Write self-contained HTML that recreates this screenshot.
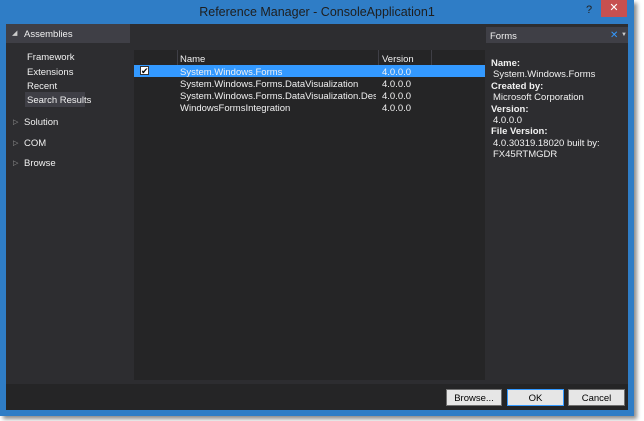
<!DOCTYPE html><html><head><style>
body{margin:0;width:644px;height:421px;background:#fff;font-family:"Liberation Sans",sans-serif;font-size:9.5px;color:#f1f1f1;position:relative;overflow:hidden}
.a{position:absolute}
.win{left:0;top:0;width:634px;height:416px;background:#2f7dc6;box-shadow:3px 3px 4px rgba(0,0,0,.45)}
.t{white-space:nowrap;margin-top:1px}
.btn{position:absolute;top:389px;height:17px;background:#e6e6e6;border:1px solid #707070;color:#000;text-align:center;line-height:17px;box-sizing:border-box}
</style></head><body>
<div class="a win"></div>
<div class="a t" style="left:0;width:634px;top:4px;text-align:center;font-size:12.5px;color:#1e1e1e">Reference Manager - ConsoleApplication1</div>
<div class="a t" style="left:586px;top:3px;font-size:11px;color:#222">?</div>
<div class="a" style="left:601px;top:0;width:26px;height:17px;background:#c75050;color:#fff;text-align:center;font-size:11px;line-height:17px">✕</div>
<div class="a" style="left:6px;top:24px;width:622px;height:386px;background:#2d2d30"></div>
<div class="a" style="left:6px;top:24px;width:124px;height:19px;background:#3f3f46"></div>
<div class="a t" style="left:12px;top:28px;font-size:7px;color:#ccc">◢</div>
<div class="a t" style="left:24px;top:28px">Assemblies</div>
<div class="a t" style="left:27px;top:51px">Framework</div>
<div class="a t" style="left:27px;top:66px">Extensions</div>
<div class="a t" style="left:27px;top:80px">Recent</div>
<div class="a" style="left:25px;top:92px;width:60px;height:15px;background:#3f3f46"></div>
<div class="a t" style="left:27px;top:94px">Search Results</div>
<div class="a t" style="left:13px;top:117px;font-size:7px;color:#999">▷</div><div class="a t" style="left:24px;top:116px">Solution</div>
<div class="a t" style="left:13px;top:138px;font-size:7px;color:#999">▷</div><div class="a t" style="left:24px;top:137px">COM</div>
<div class="a t" style="left:13px;top:158px;font-size:7px;color:#999">▷</div><div class="a t" style="left:24px;top:157px">Browse</div>
<div class="a" style="left:134px;top:50px;width:351px;height:330px;background:#252526"></div>
<div class="a" style="left:134px;top:50px;width:351px;height:15px;background:#252526;border-bottom:1px solid #3f3f46"></div>
<div class="a" style="left:177px;top:50px;width:1px;height:15px;background:#3f3f46"></div>
<div class="a" style="left:378px;top:50px;width:1px;height:15px;background:#3f3f46"></div>
<div class="a" style="left:431px;top:50px;width:1px;height:15px;background:#3f3f46"></div>
<div class="a t" style="left:180px;top:53px">Name</div>
<div class="a t" style="left:382px;top:53px">Version</div>
<div class="a" style="left:134px;top:65px;width:351px;height:12px;background:#3399ff"></div>
<div class="a" style="left:140px;top:66px;width:9px;height:9px;background:#fff;border:1px solid #333;color:#000;font-size:9px;line-height:9px;text-align:center;box-sizing:border-box">✔</div>
<div class="a t" style="left:180px;top:66px">System.Windows.Forms</div><div class="a t" style="left:382px;top:66px">4.0.0.0</div>
<div class="a t" style="left:180px;top:78px">System.Windows.Forms.DataVisualization</div><div class="a t" style="left:382px;top:78px">4.0.0.0</div>
<div class="a t" style="left:180px;top:90px;width:196px;overflow:hidden">System.Windows.Forms.DataVisualization.Desi...</div><div class="a t" style="left:382px;top:90px">4.0.0.0</div>
<div class="a t" style="left:180px;top:102px">WindowsFormsIntegration</div><div class="a t" style="left:382px;top:102px">4.0.0.0</div>
<div class="a" style="left:486px;top:27px;width:142px;height:16px;background:#3f3f46"></div>
<div class="a t" style="left:490px;top:30px">Forms</div>
<div class="a t" style="left:610px;top:29px;color:#3399ff;font-size:10px">✕</div>
<div class="a t" style="left:621px;top:31px;font-size:6px;color:#ccc">▼</div>
<div class="a t" style="left:491px;top:57px;font-weight:bold">Name:</div>
<div class="a t" style="left:493px;top:68px">System.Windows.Forms</div>
<div class="a t" style="left:491px;top:80px;font-weight:bold">Created by:</div>
<div class="a t" style="left:493px;top:91px">Microsoft Corporation</div>
<div class="a t" style="left:491px;top:103px;font-weight:bold">Version:</div>
<div class="a t" style="left:493px;top:114px">4.0.0.0</div>
<div class="a t" style="left:491px;top:125px;font-weight:bold">File Version:</div>
<div class="a t" style="left:493px;top:137px">4.0.30319.18020 built by:</div>
<div class="a t" style="left:493px;top:148px">FX45RTMGDR</div>
<div class="a" style="left:6px;top:384px;width:622px;height:26px;background:#252526"></div>
<div class="btn" style="left:446px;width:56px">Browse...</div>
<div class="btn" style="left:507px;width:57px;border-color:#3399ff">OK</div>
<div class="btn" style="left:568px;width:57px">Cancel</div>
</body></html>
